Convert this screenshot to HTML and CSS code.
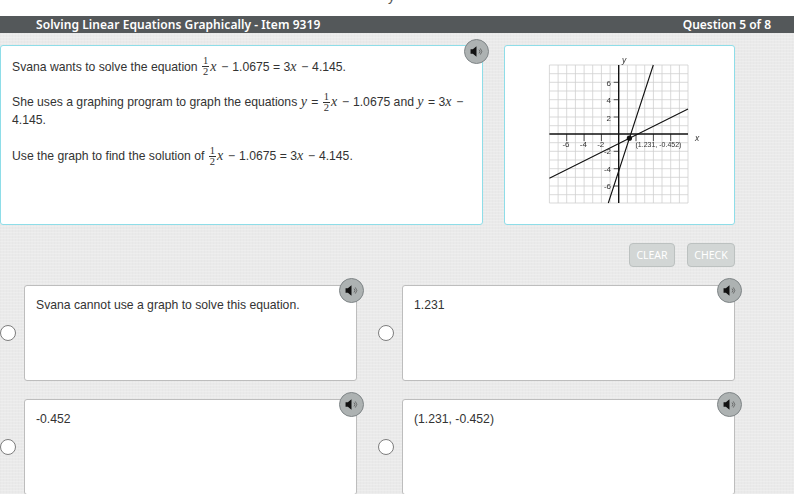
FILE: index.html
```html
<!DOCTYPE html>
<html lang="en">
<head>
    <meta charset="UTF-8">
    <title>Solving Linear Equations Graphically - Item 9319</title>
    <link rel="stylesheet" href="styles.css">
</head>
<body>
    <svg class="defs" width="0" height="0">
        <symbol id="speaker" viewBox="0 0 24 24">
            <path d="M5.8 9.6h2.4l3.8-3.2v11.2l-3.8-3.2H5.800z" fill="#111"></path>
            <path d="M14.600 10a2.800 2.800 0 0 1 0 4M16 8.800a4.600 4.600 0 0 1 0 6.400" fill="none" stroke="#555" stroke-width="0.8"></path>
        </symbol>
    </svg>

    <div class="top-strip"><span class="cut-text">y</span></div>
    <div class="title-bar">
        <span class="title-text">Solving Linear Equations Graphically - Item 9319</span>
        <span>Question 5 of 8</span>
    </div>

    <div class="stem">
        <div class="card question-card">
            <p>Svana wants to solve the equation <span class="frac"><span class="num">1</span><span class="den">2</span></span><i class="var">x</i><span class="op">−</span>1.0675 = 3<i class="var">x</i><span class="op">−</span>4.145.</p>
            <p>She uses a graphing program to graph the equations <i class="var">y</i> = <span class="frac"><span class="num">1</span><span class="den">2</span></span><i class="var">x</i><span class="op">−</span>1.0675 and <i class="var">y</i> = 3<i class="var">x</i><span class="op">−</span> 4.145.</p>
            <p>Use the graph to find the solution of <span class="frac"><span class="num">1</span><span class="den">2</span></span><i class="var">x</i><span class="op">−</span>1.0675 = 3<i class="var">x</i><span class="op">−</span>4.145.</p>
            <button class="speaker"><svg><use href="#speaker"></use></svg></button>
        </div>
        <div class="card figure-card">
            <svg class="graph" width="160" height="160" viewBox="540 50 160 160">
                <g class="grid">
                    <path d="M549.4 65V203M558.1 65V203M566.7 65V203M575.4 65V203M584.1 65V203M592.7 65V203M601.4 65V203M610.1 65V203M627.4 65V203M636 65V203M644.7 65V203M653.4 65V203M662 65V203M670.7 65V203M679.4 65V203M688 65V203"></path>
                    <path d="M549.4 65H688M549.4 73.7H688M549.4 82.3H688M549.4 91H688M549.4 99.7H688M549.4 108.3H688M549.4 117H688M549.4 125.7H688M549.4 142.7H688M549.4 151.3H688M549.4 160H688M549.4 168.7H688M549.4 177.3H688M549.4 186H688M549.4 194.7H688M549.4 203H688"></path>
                </g>
                <g class="ticks">
                    <path d="M566.7 134V141M584.1 134V141M601.4 134V141M636 134V141M653.4 134V141M670.7 134V141"></path>
                    <path d="M613.7 82.3H618.7M613.7 99.7H618.7M613.7 117H618.7M613.7 151.3H618.7M613.7 168.7H618.7M613.7 186H618.7"></path>
                </g>
                <path class="axis" d="M618.7 65V203M549.4 134H688"></path>
                <path class="line" d="M608.3 203L653.3 65M549.4 178.3L688 109"></path>
                <circle cx="629.4" cy="138.2" r="2.6" fill="#111"></circle>
                <g class="tick-labels">
                    <text x="566" y="146.5" text-anchor="middle">-6</text>
                    <text x="583.4" y="146.5" text-anchor="middle">-4</text>
                    <text x="600.7" y="146.5" text-anchor="middle">-2</text>
                    <text x="611" y="85.5" text-anchor="end">6</text>
                    <text x="611" y="103" text-anchor="end">4</text>
                    <text x="611" y="120.5" text-anchor="end">2</text>
                    <text x="611" y="154" text-anchor="end">-2</text>
                    <text x="611" y="171.5" text-anchor="end">-4</text>
                    <text x="611" y="189" text-anchor="end">-6</text>
                    <text class="point-label" x="635.5" y="146.5">(1.231, -0.452)</text>
                </g>
                <text class="axis-name" x="622" y="63">y</text>
                <text class="axis-name" x="695" y="141">x</text>
            </svg>
        </div>
    </div>

    <div class="actions">
        <button class="action-btn clear-btn">CLEAR</button>
        <button class="action-btn check-btn">CHECK</button>
    </div>

    <div class="answers">
        <div class="answer">
            <span class="radio"></span>
            <div class="answer-card">Svana cannot use a graph to solve this equation.
                <button class="speaker"><svg><use href="#speaker"></use></svg></button>
            </div>
        </div>
        <div class="answer">
            <span class="radio"></span>
            <div class="answer-card">1.231
                <button class="speaker"><svg><use href="#speaker"></use></svg></button>
            </div>
        </div>
        <div class="answer">
            <span class="radio"></span>
            <div class="answer-card">-0.452
                <button class="speaker"><svg><use href="#speaker"></use></svg></button>
            </div>
        </div>
        <div class="answer">
            <span class="radio"></span>
            <div class="answer-card">(1.231, -0.452)
                <button class="speaker"><svg><use href="#speaker"></use></svg></button>
            </div>
        </div>
    </div>
</body>
</html>
```

FILE: styles.css
```css
* {
    margin: 0;
    padding: 0;
    box-sizing: border-box;
}

body {
    width: 794px;
    height: 494px;
    overflow: hidden;
    font-family: "Liberation Sans", Arial, sans-serif;
    font-size: 12.2px;
    color: #333;
    background-color: #eaeaea;
    background-image:
        repeating-linear-gradient(0deg, rgba(255, 255, 255, 0.2) 0 1px, transparent 1px 3px),
        repeating-linear-gradient(90deg, rgba(0, 0, 0, 0.012) 0 1px, transparent 1px 3px);
}

.defs {
    position: absolute;
}

.top-strip {
    height: 16px;
    background: white;
    overflow: hidden;
    padding-left: 388px;
}

.cut-text {
    display: block;
    font-size: 14px;
    line-height: 14px;
    margin-top: -11px;
    color: #555;
}

.title-bar {
    height: 17px;
    padding: 0 23px 0 36px;
    display: flex;
    justify-content: space-between;
    align-items: center;
    background: #54585a;
    color: white;
    font-family: "Noto Sans", sans-serif;
    font-size: 12px;
    font-weight: 600;
}

.title-text {
    letter-spacing: 0.07px;
}

/* Question and figure */
.stem {
    display: flex;
    gap: 21px;
    margin-top: 12px;
}

.card {
    position: relative;
    height: 180px;
    background: white;
    border: 1px solid #8edde8;
    border-radius: 3px;
}

.question-card {
    width: 483px;
    padding: 12.6px 11px;
    line-height: 17.5px;
}

.question-card p {
    margin-bottom: 18.4px;
}

.question-card .speaker {
    top: -7px;
    right: -7px;
}

.figure-card {
    width: 231px;
    padding: 4px 35px;
}

.frac {
    display: inline-flex;
    flex-direction: column;
    align-items: center;
    vertical-align: middle;
    margin: -7px 1px -6px 1px;
    font-family: "Liberation Serif", serif;
    font-size: 10.5px;
    line-height: 10px;
}

.num {
    border-bottom: 1px solid #333;
    padding: 0 1px;
}

.var {
    font-family: "Liberation Serif", serif;
    font-size: 14px;
    line-height: 1;
    padding-right: 1px;
}

.op {
    margin: 0 3.8px;
}

.speaker {
    position: absolute;
    width: 25px;
    height: 25px;
    border: 1px solid #7f8587;
    border-radius: 50%;
    background: #adb2b2;
}

.speaker svg {
    display: block;
    width: 23px;
    height: 23px;
}

/* Graph */
.graph {
    display: block;
    filter: blur(0.35px);
}

.grid path {
    fill: none;
    stroke: #cfcfcf;
    stroke-width: 0.8;
}

.ticks path,
.axis,
.line {
    fill: none;
    stroke: #111;
}

.ticks path {
    stroke-width: 0.7;
}

.axis {
    stroke-width: 1.4;
}

.line {
    stroke-width: 1.1;
}

.tick-labels text {
    font-size: 8px;
    fill: #333;
}

.tick-labels .point-label {
    font-size: 7px;
}

.axis-name {
    font-size: 8.5px;
    font-style: italic;
    fill: #333;
}

/* Clear / check */
.actions {
    display: flex;
    justify-content: flex-end;
    gap: 12px;
    width: 735px;
    margin-top: 18px;
}

.action-btn {
    height: 24px;
    border: 1px solid #bcc1c0;
    border-radius: 4px;
    background: #d2d6d5;
    color: white;
    font-family: "Noto Sans", sans-serif;
    font-size: 10.5px;
}

.clear-btn {
    width: 46px;
}

.check-btn {
    width: 48px;
}

/* Answers */
.answers {
    display: grid;
    grid-template-columns: 357px 357px;
    column-gap: 21px;
    row-gap: 18px;
    margin-top: 18px;
}

.answer {
    display: flex;
    align-items: center;
    gap: 8px;
}

.radio {
    flex: none;
    width: 16px;
    height: 16px;
    border: 1px solid #7d7d7d;
    border-radius: 50%;
    background: white;
}

.answer-card {
    position: relative;
    flex: 1;
    height: 96px;
    padding: 12px 11px;
    line-height: 15px;
    background: white;
    border: 1px solid #bdbdbd;
    border-radius: 3px;
}

.answer-card .speaker {
    top: -8px;
    right: -8px;
}
```
